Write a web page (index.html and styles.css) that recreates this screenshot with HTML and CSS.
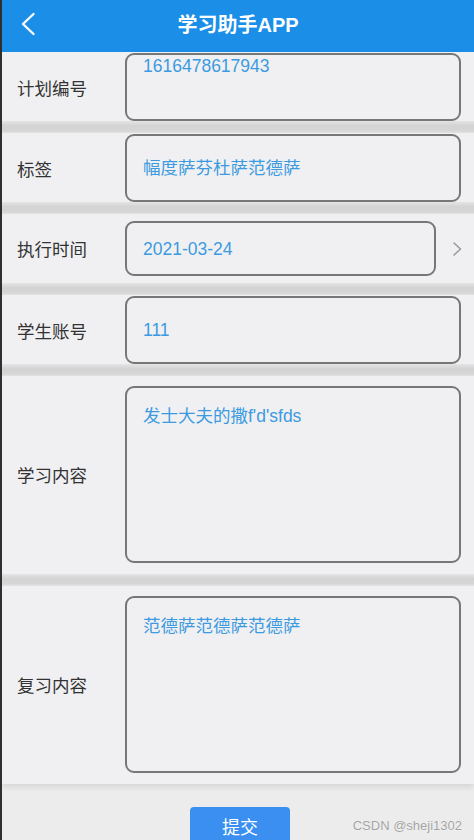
FILE: index.html
```html
<!DOCTYPE html>
<html lang="zh">
<head>
<meta charset="utf-8">
<title>学习助手APP</title>
<link rel="stylesheet" href="styles.css">
</head>
<body>
<div class="app">
  <header class="topbar">
    <svg class="back" width="16" height="24" viewBox="0 0 16 24"><path d="M13.5 2 L3 12 L13.5 22" fill="none" stroke="#fff" stroke-width="2.4" stroke-linecap="round" stroke-linejoin="round"/></svg>
    <h1 class="title">学习助手APP</h1>
    <span></span>
  </header>
  <main class="form">
    <div class="row">
      <div class="label">计划编号</div>
      <div class="box box-top">1616478617943</div>
    </div>
    <div class="sep"></div>
    <div class="row">
      <div class="label">标签</div>
      <div class="box">幅度萨芬杜萨范德萨</div>
    </div>
    <div class="sep"></div>
    <div class="row row-chev">
      <div class="label">执行时间</div>
      <div class="box box-short">2021-03-24</div>
      <svg class="chev" width="12" height="16" viewBox="0 0 12 16"><path d="M3 2 L9.5 8 L3 14" fill="none" stroke="#9a9a9a" stroke-width="1.6" stroke-linecap="round" stroke-linejoin="round"/></svg>
    </div>
    <div class="sep"></div>
    <div class="row">
      <div class="label">学生账号</div>
      <div class="box">111</div>
    </div>
    <div class="sep"></div>
    <div class="row row-tall">
      <div class="label">学习内容</div>
      <div class="box box-area">发士大夫的撒f'd'sfds</div>
    </div>
    <div class="sep"></div>
    <div class="row row-tall">
      <div class="label">复习内容</div>
      <div class="box box-area">范德萨范德萨范德萨</div>
    </div>
  </main>
  <div class="footer">
    <button class="submit">提交</button>
  </div>
  <div class="watermark">CSDN @sheji1302</div>
</div>
</body>
</html>
```

FILE: styles.css
```css
html, body {
  margin: 0;
  padding: 0;
  height: 100%;
  overflow: hidden;
  background: #2f2f2f;
}

.app {
  position: relative;
  height: 840px;
  margin-left: 2px;
  background: #ececec;
  font-family: "Liberation Sans", "Noto Sans CJK SC", sans-serif;
  overflow: hidden;
}

.topbar {
  height: 52px;
  background: #1b8fe8;
  display: grid;
  grid-template-columns: 1fr auto 1fr;
  align-items: center;
}

.back {
  margin-left: 18px;
  margin-top: -4px;
}

.title {
  margin: 0 0 5px 0;
  color: #fff;
  font-size: 20px;
  font-weight: bold;
  font-family: "Liberation Sans", "Noto Sans CJK SC", sans-serif;
}

.form {
  box-shadow: 0 3px 6px rgba(0, 0, 0, 0.10);
}

.row {
  display: grid;
  grid-template-columns: 123px 1fr;
  align-items: center;
  padding: 1px 13px 0 0;
  background: #f0f0f2;
}

.row-chev {
  grid-template-columns: 123px 1fr 25px;
  height: 69px;
  padding-top: 0;
  box-sizing: border-box;
}

.row-tall {
  padding: 10px 13px 11px 0;
}

.label {
  padding-left: 15px;
  font-size: 17.5px;
  color: #333;
}

.box {
  box-sizing: border-box;
  height: 68px;
  border: 2px solid #777;
  border-radius: 9px;
  background: #f0f0f2;
  color: #3c9be0;
  font-size: 17.5px;
  line-height: 20px;
  padding-left: 16px;
  display: flex;
  align-items: center;
}

.box-top {
  align-items: flex-start;
  padding-top: 1px;
}

.box-short {
  height: 55px;
}

.box-area {
  height: 177px;
  align-items: flex-start;
  padding-top: 18px;
}

.chev {
  justify-self: end;
  margin-right: -2px;
}

.sep {
  height: 12px;
  background: linear-gradient(#e4e4e4, #d3d3d3 40%, #d6d6d6 80%, #e2e2e2);
}

.footer {
  display: flex;
  justify-content: center;
  padding-top: 23px;
  padding-left: 4px;
}

.submit {
  width: 100px;
  height: 50px;
  border: none;
  border-radius: 4px;
  background: #3a8ff0;
  color: #fff;
  font-size: 18px;
  line-height: 20px;
  font-family: "Liberation Sans", "Noto Sans CJK SC", sans-serif;
  padding: 11px 0 0 0;
  align-self: flex-start;
  display: flex;
  justify-content: center;
  align-items: flex-start;
}

.watermark {
  position: absolute;
  right: 12px;
  bottom: 7px;
  font-size: 13px;
  color: #a3a3a3;
  text-shadow: 0 0 1px #fff;
}
```
